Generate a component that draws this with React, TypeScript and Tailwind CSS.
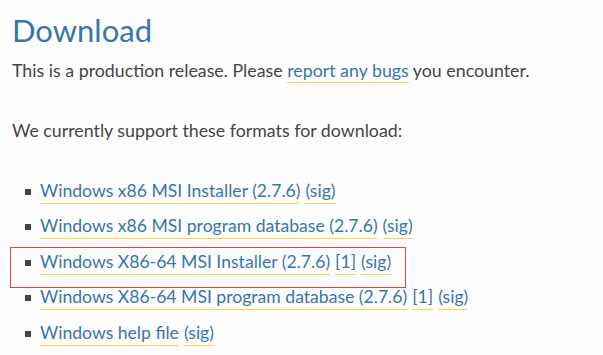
import React from "react";

const font = { fontFamily: "Lato, 'Noto Sans', sans-serif" };

function L({ children }: { children: React.ReactNode }) {
  return (
    <a href="#" className="text-[#3776ab] border-b border-[#ffd343] pb-[1px]">
      {children}
    </a>
  );
}

const items: React.ReactNode[][] = [
  [<L key="a">Windows x86 MSI Installer (2.7.6)</L>, <L key="s">(sig)</L>],
  [<L key="a">Windows x86 MSI program database (2.7.6)</L>, <L key="s">(sig)</L>],
  [<L key="a">Windows X86-64 MSI Installer (2.7.6)</L>, <L key="1">[1]</L>, <L key="s">(sig)</L>],
  [<L key="a">Windows X86-64 MSI program database (2.7.6)</L>, <L key="1">[1]</L>, <L key="s">(sig)</L>],
  [<L key="a">Windows help file</L>, <L key="s">(sig)</L>],
];

export default function App() {
  return (
    <div className="w-[603px] h-[355px] overflow-hidden bg-[#fdfdfd] px-3 text-[#444]" style={font}>
      <h1 className="text-[31px] leading-[40px] pt-[10px] text-[#3776ab]">Download</h1>
      <p className="text-[17.8px] leading-[24px] mt-[8px]">
        This is a production release. Please <L>report any bugs</L> you encounter.
      </p>
      <p className="text-[17.8px] leading-[24px] mt-[36px]">We currently support these formats for download:</p>
      <ul className="relative mt-[32px] text-[17.6px]">
        {items.map((parts, i) => (
          <li key={i} className="flex items-center h-[35.5px]">
            <span className="w-[6px] h-[6px] bg-[#444] ml-[13px] mr-[9px] shrink-0" />
            <span className="flex gap-[5px] whitespace-nowrap leading-[22px]">{parts}</span>
          </li>
        ))}
        <div className="absolute left-[-2px] top-[73px] w-[396px] h-[41px] border border-[#e8403f]" />
      </ul>
    </div>
  );
}
